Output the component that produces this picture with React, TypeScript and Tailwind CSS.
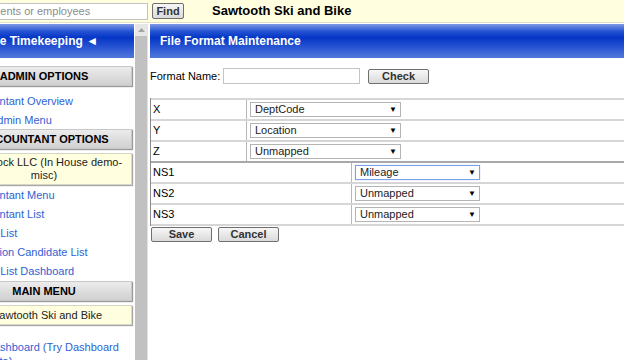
import React from "react";

const blueBand =
  "bg-[linear-gradient(to_bottom,#8199e6_0%,#2352d2_22%,#0536c6_40%,#2a56d2_70%,#5378da_100%)]";

function SectionHeader({ label }: { label: string }) {
  return (
    <div className="h-[20px] mr-[2px] flex items-center justify-center text-[11px] font-bold text-black bg-[linear-gradient(to_bottom,#ececec,#d0d0d0)] border border-[#c8c8c8] shadow-[1px_1px_1px_#9a9a9a]">
      {label}
    </div>
  );
}

function NavLink({ label, pad = "pl-[13px]" }: { label: string; pad?: string }) {
  return (
    <div className={`h-[19px] flex items-center ${pad} text-[11px] text-[#2f5fd3] whitespace-nowrap`}>
      {label}
    </div>
  );
}

function Select({ value, width, focus }: { value: string; width: string; focus?: boolean }) {
  return (
    <div
      className={`${width} h-[15px] flex items-center justify-between pl-[4px] pr-[3px] bg-white text-[11px] text-[#222] border ${
        focus ? "border-[#7ca2e6] shadow-[0_0_1px_#9ab8f0]" : "border-[#b4b4b4]"
      }`}
    >
      <span>{value}</span>
      <span className="text-[8px] text-black">▼</span>
    </div>
  );
}

function GrayButton({ label, width }: { label: string; width: string }) {
  return (
    <button
      className={`${width} h-[15px] flex items-center justify-center rounded-[2px] border border-[#6f6f6f] bg-[linear-gradient(to_bottom,#f7f7f7,#dadada)] text-[11px] font-bold text-[#333] leading-none`}
    >
      {label}
    </button>
  );
}

const dims = [
  { k: "X", v: "DeptCode" },
  { k: "Y", v: "Location" },
  { k: "Z", v: "Unmapped" },
];

const nonStd = [
  { k: "NS1", v: "Mileage", focus: true },
  { k: "NS2", v: "Unmapped" },
  { k: "NS3", v: "Unmapped" },
];

export default function App() {
  return (
    <div className="w-[624px] h-[360px] overflow-hidden bg-white text-black font-['Liberation_Sans',Arial,sans-serif]">
      {/* top bar */}
      <div className="h-[23px] bg-[#ffffe0] border-b border-[#e4e0c4] flex items-center whitespace-nowrap">
        <input
          placeholder="Search clients or employees"
          className="-ml-[52px] w-[200px] h-[17px] shrink-0 border border-[#c2c2c2] bg-white px-[3px] text-[11px] outline-none placeholder:text-[#8c8c8c]"
        />
        <button className="ml-[4px] w-[32px] h-[16px] shrink-0 flex items-center justify-center rounded-[2px] border border-[#6f6f6f] bg-[linear-gradient(to_bottom,#f7f7f7,#dadada)] text-[11px] font-bold text-[#333]">
          Find
        </button>
        <span className="ml-[28px] text-[13px] font-bold">Sawtooth Ski and Bike</span>
      </div>

      <div className="flex mt-[1px] h-[336px]">
        {/* left nav, scrolled sideways */}
        <div className="w-[134px] shrink-0 overflow-hidden">
          <div className="-ml-[44px] w-[178px]">
            <div className={`h-[34px] ${blueBand} flex items-center pl-[13px] text-[12px] font-bold text-white whitespace-nowrap`}>
              Online Timekeeping ◄
            </div>

            <div className="mt-[8px]">
              <SectionHeader label="ADMIN OPTIONS" />
            </div>
            <div className="pt-[6px]">
              <NavLink label="Accountant Overview" />
              <NavLink label="Admin Menu" pad="pl-[34px]" />
            </div>
            <div className="-mt-[1px]">
              <SectionHeader label="ACCOUNTANT OPTIONS" />
            </div>
            <div className="mt-[4px] mr-[2px] h-[32px] flex flex-col items-center justify-center bg-[#ffffe0] border border-[#d6d6c4] shadow-[1px_1px_1px_#a8a8a8] text-[11px] leading-[13px] text-[#222] text-center">
              <span>Woodlock LLC (In House demo-</span>
              <span>misc)</span>
            </div>
            <div className="mt-[1px]">
              <NavLink label="Accountant Menu" />
              <NavLink label="Accountant List" />
              <NavLink label="Client List" />
              <NavLink label="Migration Candidate List" />
              <NavLink label="Client List Dashboard" />
            </div>
            <SectionHeader label="MAIN MENU" />
            <div className="mt-[4px] mr-[2px] h-[20px] flex items-center pl-[35px] bg-[#ffffe0] border border-[#d6d6c4] shadow-[1px_1px_1px_#a8a8a8] text-[11px] text-[#222] whitespace-nowrap">
              Sawtooth Ski and Bike
            </div>
            <div className="mt-[15px] pl-[30px] text-[11px] leading-[14px] text-[#2f5fd3]">
              Dashboard (Try Dashboard
              <br />
              Beta)
            </div>
          </div>
        </div>

        {/* scrollbar */}
        <div className="ml-[1px] w-[13px] shrink-0 flex flex-col bg-[#c1c1c1] border-r border-[#e2e2e2]">
          <div className="h-[12px] bg-[#e6e6e6] flex items-center justify-center">
            <svg width="7" height="4" viewBox="0 0 7 4">
              <path d="M0 4 L3.5 0 L7 4 Z" fill="#a3a3a3" />
            </svg>
          </div>
        </div>

        {/* main */}
        <div className="ml-[2px] flex-1 min-w-0">
          <div className={`h-[34px] ${blueBand} flex items-center pl-[10px] text-[12px] font-bold text-white`}>
            File Format Maintenance
          </div>

          <div className="mt-[10px] h-[16px] flex items-center text-[11px]">
            <span className="w-[73px] shrink-0">Format Name:</span>
            <input className="w-[137px] h-[16px] border border-[#c4c4c4] bg-white outline-none" />
            <div className="ml-[8px]">
              <GrayButton label="Check" width="w-[61px]" />
            </div>
          </div>

          {/* dimension mapping */}
          <div className="mt-[14px] border-l border-[#8a8a8a]">
            {dims.map((d) => (
              <div key={d.k} className="h-[21px] flex border-t-2 border-[#d6d6d6]">
                <div className="w-[96px] shrink-0 pl-[2px] flex items-center border-r border-[#b8b8b8] text-[11px]">
                  {d.k}
                </div>
                <div className="flex items-center pl-[3px]">
                  <Select value={d.v} width="w-[151px]" />
                </div>
              </div>
            ))}
          </div>

          {/* non standard mapping */}
          <div className="border-l border-[#8a8a8a]">
            {nonStd.map((d, i) => (
              <div
                key={d.k}
                className={`h-[21px] flex border-t-2 ${i === 0 ? "border-[#a8a8a8]" : "border-[#d6d6d6]"}`}
              >
                <div className="w-[201px] shrink-0 pl-[2px] flex items-center border-r border-[#b8b8b8] text-[11px]">
                  {d.k}
                </div>
                <div className="flex items-center pl-[3px]">
                  <Select value={d.v} width="w-[125px]" focus={d.focus} />
                </div>
              </div>
            ))}
            <div className="border-t-2 border-[#d6d6d6]" />
          </div>

          <div className="mt-[1px] flex gap-[6px] pl-[1px]">
            <GrayButton label="Save" width="w-[61px]" />
            <GrayButton label="Cancel" width="w-[61px]" />
          </div>
        </div>
      </div>
    </div>
  );
}
